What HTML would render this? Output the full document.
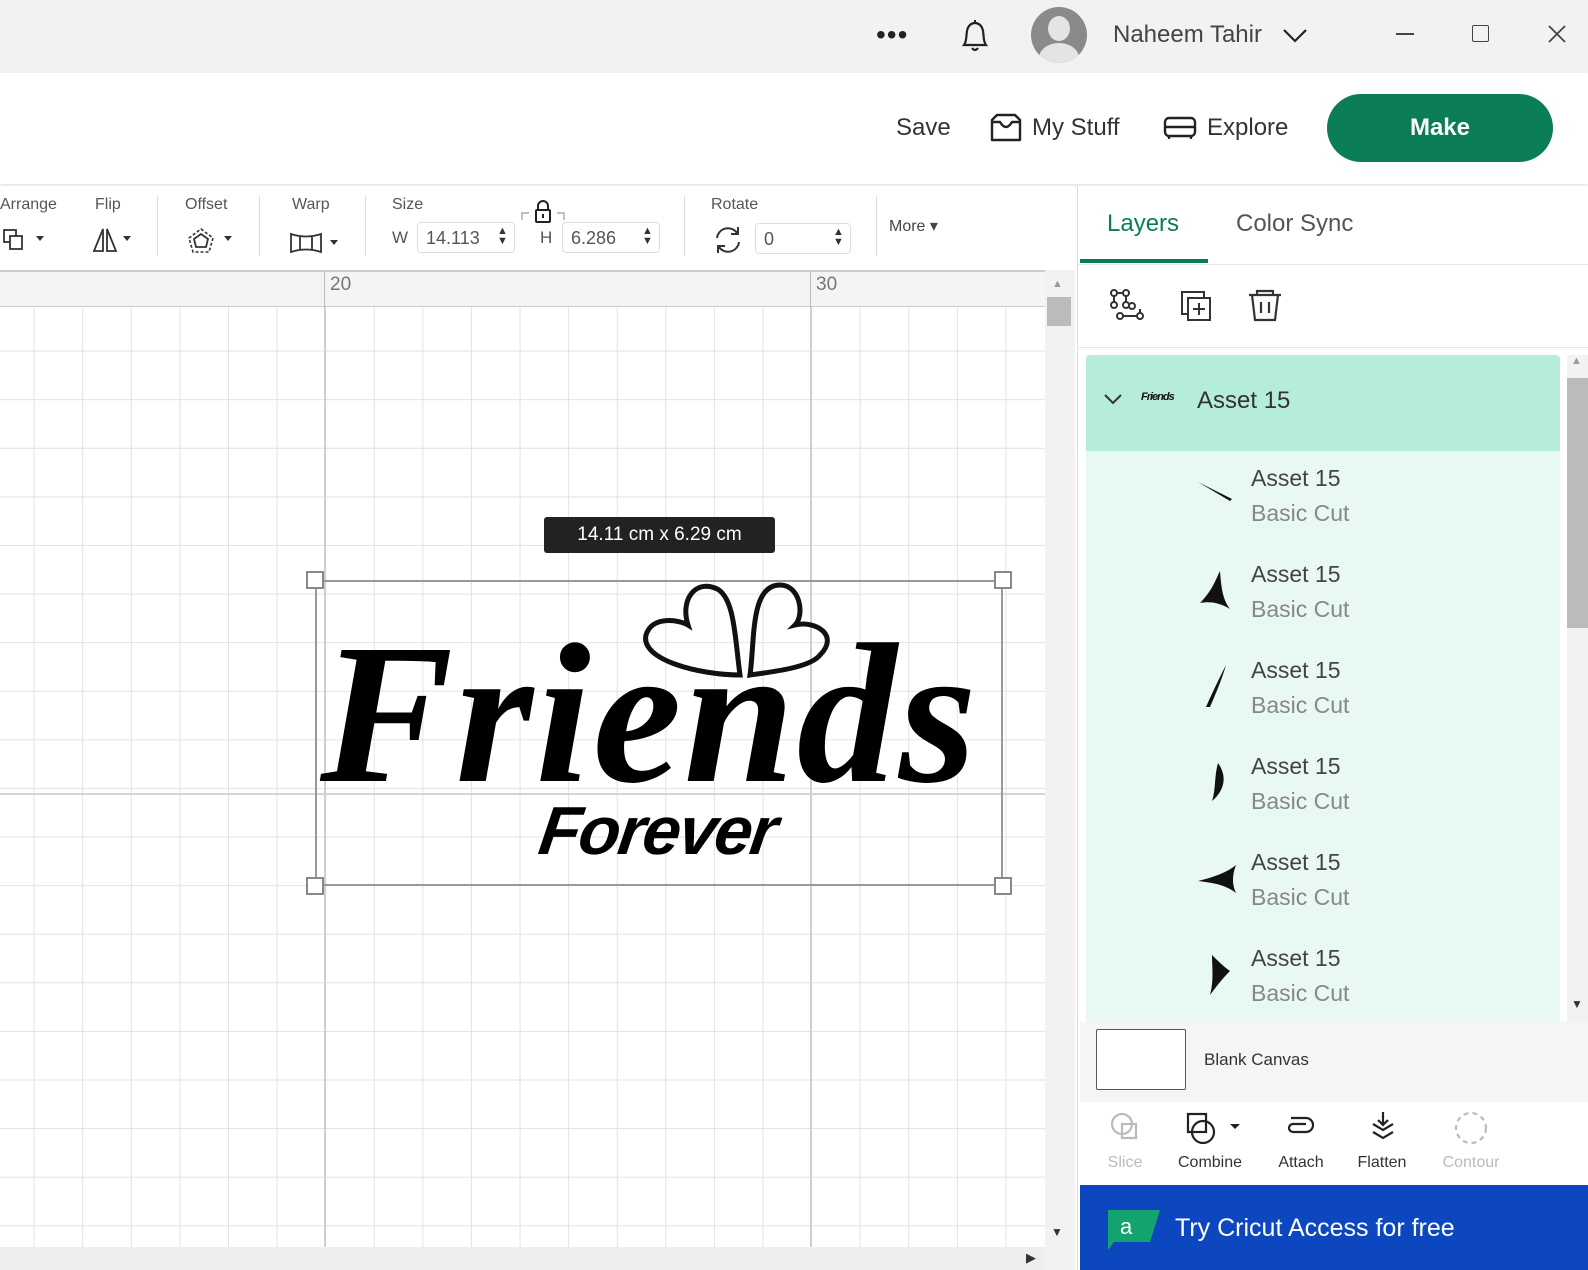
<!DOCTYPE html>
<html><head><meta charset="utf-8"><style>
*{box-sizing:border-box;margin:0;padding:0}
body{width:1588px;height:1270px;overflow:hidden;background:#fff;font-family:"Liberation Sans",sans-serif;color:#333;position:relative}
.a{position:absolute}
.top{left:0;top:0;width:1588px;height:73px;background:#f2f2f2}
.hdr{left:0;top:73px;width:1588px;height:111px;background:#fff;box-shadow:0 2px 4px rgba(0,0,0,.12)}
.tb{left:0;top:186px;width:1075px;height:84px;background:#fff}
.lbl{font-size:16px;color:#555}
.inp{border:1px solid #ddd;border-radius:4px;height:31px;font-size:18px;color:#555;padding:5px 8px;background:#fff}
.sep{width:1px;height:60px;background:#ddd;top:196px}
.ruler{left:0;top:270px;width:1045px;height:37px;background:#f4f4f4;border-top:2px solid #ccc;border-bottom:1px solid #ccc}
.grid{left:0;top:307px;width:1045px;height:940px;background:#fff;
background-image:linear-gradient(90deg,#e2e2e2 1px,transparent 1px),linear-gradient(#e2e2e2 1px,transparent 1px);
background-size:48.6px 48.6px;background-position:-15px 0,0 -5px}
.rp{left:1077px;top:186px;width:511px;height:1084px;background:#fff;border-left:1px solid #ddd}
.row{left:1086px;width:474px;height:96px;background:#e8f8f3}
.t1{position:absolute;left:165px;top:14px;font-size:23px;color:#444}
.t2{position:absolute;left:165px;top:49px;font-size:23px;color:#888}
.act{font-size:16px;text-align:center;width:80px}
</style></head><body>
<div class="a top"></div>
<div class="a" style="left:876px;top:30px;font-size:28px;letter-spacing:1px;color:#222;line-height:10px">•••</div>
<svg class="a" style="left:958px;top:18px" width="34" height="36" viewBox="0 0 34 36"><path d="M6 27 C9 23 8 18 9 13 C10 7 14 5 17 5 C20 5 24 7 25 13 C26 18 25 23 28 27 Z M14 30 Q17 34 20 30" fill="none" stroke="#222" stroke-width="2.2"/><path d="M16 2h2v3h-2z" fill="#222"/></svg>
<div class="a" style="left:1031px;top:7px;width:56px;height:56px;border-radius:50%;background:#8a8a8a;overflow:hidden"><div class="a" style="left:17px;top:9px;width:22px;height:25px;border-radius:50%;background:#e4e4e4"></div><div class="a" style="left:8px;top:36px;width:40px;height:30px;border-radius:50%;background:#e4e4e4"></div></div>
<div class="a" style="left:1113px;top:21px;font-size:24px;color:#444">Naheem Tahir</div>
<svg class="a" style="left:1282px;top:28px" width="26" height="16"><path d="M2 2 L13 13 L24 2" fill="none" stroke="#222" stroke-width="2.2"/></svg>
<div class="a" style="left:1396px;top:33px;width:18px;height:2px;background:#444"></div>
<div class="a" style="left:1472px;top:25px;width:17px;height:17px;border:1.5px solid #444;border-radius:2px"></div>
<svg class="a" style="left:1547px;top:24px" width="20" height="20"><path d="M2 2L18 18M18 2L2 18" stroke="#444" stroke-width="1.8"/></svg>
<div class="a hdr"></div>
<div class="a" style="left:896px;top:114px;font-size:24px;color:#333">Save</div>
<svg class="a" style="left:989px;top:112px" width="34" height="32"><path d="M3 8 L8 3 H26 L31 8 V28 H3 Z M3 10 H11 Q17 20 23 10 H31" fill="none" stroke="#222" stroke-width="2.4" stroke-linejoin="round"/></svg>
<div class="a" style="left:1032px;top:114px;font-size:24px;color:#333">My Stuff</div>
<svg class="a" style="left:1163px;top:116px" width="34" height="24"><rect x="2" y="2" width="30" height="18" rx="4" fill="none" stroke="#222" stroke-width="2.4"/><path d="M2 11 H32 M6 20v3 M28 20v3" stroke="#222" stroke-width="2.4"/></svg>
<div class="a" style="left:1207px;top:114px;font-size:24px;color:#333">Explore</div>
<div class="a" style="left:1327px;top:94px;width:226px;height:68px;border-radius:34px;background:#0b7d55;color:#fff;font-size:24px;font-weight:bold;text-align:center;line-height:68px">Make</div>
<div class="a tb"></div>
<div class="a lbl" style="left:0;top:196px">Arrange</div>
<div class="a lbl" style="left:95px;top:196px">Flip</div>
<div class="a lbl" style="left:185px;top:196px">Offset</div>
<div class="a lbl" style="left:292px;top:196px">Warp</div>
<div class="a lbl" style="left:392px;top:196px">Size</div>
<div class="a lbl" style="left:711px;top:196px">Rotate</div>
<div class="a sep" style="left:157px"></div><div class="a sep" style="left:259px"></div><div class="a sep" style="left:365px"></div><div class="a sep" style="left:684px"></div><div class="a sep" style="left:876px"></div>
<svg class="a" style="left:2px;top:228px" width="46" height="26"><rect x="2" y="2" width="12" height="12" fill="none" stroke="#333" stroke-width="1.8"/><rect x="8" y="8" width="12" height="13" fill="#fff" stroke="#333" stroke-width="1.8"/><path d="M34 8l4 5 4-5z" fill="#333"/></svg>
<svg class="a" style="left:90px;top:226px" width="46" height="28"><path d="M4 25 L13 3 V25 Z M17 25 V3 L26 25 Z" fill="none" stroke="#333" stroke-width="1.8"/><path d="M33 10l4 5 4-5z" fill="#333"/></svg>
<svg class="a" style="left:186px;top:226px" width="50" height="30"><path d="M15 3 L27 12 L23 26 H7 L3 12 Z" fill="none" stroke="#333" stroke-width="1.6" stroke-dasharray="3 2"/><path d="M15 8 L22 13 L20 21 H10 L8 13 Z" fill="none" stroke="#333" stroke-width="1.8"/><path d="M38 10l4 5 4-5z" fill="#333"/></svg>
<svg class="a" style="left:288px;top:230px" width="56" height="26"><path d="M3 4 Q18 9 33 4 V22 Q18 17 3 22 Z M12 7V20 M24 7V20" fill="none" stroke="#333" stroke-width="1.8"/><path d="M42 10l4 5 4-5z" fill="#333"/></svg>
<div class="a lbl" style="left:392px;top:228px;font-size:17px">W</div>
<div class="a inp" style="left:417px;top:222px;width:98px">14.113</div>
<div class="a" style="left:497px;top:226px;font-size:11px;line-height:10px;color:#333">▲<br>▼</div>
<div class="a lbl" style="left:540px;top:228px;font-size:17px">H</div>
<div class="a inp" style="left:562px;top:222px;width:98px">6.286</div>
<div class="a" style="left:642px;top:226px;font-size:11px;line-height:10px;color:#333">▲<br>▼</div>
<svg class="a" style="left:518px;top:200px" width="50" height="24"><path d="M4 20V13H11 M46 20V13H39" fill="none" stroke="#999" stroke-width="1.2"/><rect x="18" y="10" width="14" height="12" rx="1" fill="none" stroke="#222" stroke-width="2"/><path d="M20 10V6a5 5 0 0 1 10 0V10" fill="none" stroke="#222" stroke-width="2"/><rect x="24" y="14" width="2" height="4" fill="#222"/></svg>
<svg class="a" style="left:713px;top:225px" width="30" height="30"><path d="M4 13 A11 11 0 0 1 24 8 M26 17 A11 11 0 0 1 6 22" fill="none" stroke="#333" stroke-width="2"/><path d="M25 2V9H18 M5 28V21H12" fill="none" stroke="#333" stroke-width="2"/></svg>
<div class="a inp" style="left:755px;top:223px;width:96px">0</div>
<div class="a" style="left:833px;top:227px;font-size:11px;line-height:10px;color:#333">▲<br>▼</div>
<div class="a" style="left:889px;top:216px;font-size:16px;color:#444">More ▾</div>
<div class="a ruler"><div class="a" style="left:330px;top:2px;font-size:19px;color:#777">20</div><div class="a" style="left:816px;top:2px;font-size:19px;color:#777">30</div><div class="a" style="left:324px;top:0;width:1px;height:35px;background:#bbb"></div><div class="a" style="left:810px;top:0;width:1px;height:35px;background:#bbb"></div></div>
<div class="a grid"></div>
<div class="a" style="left:324px;top:307px;width:1.5px;height:940px;background:#cfcfcf"></div>
<div class="a" style="left:810px;top:307px;width:1.5px;height:940px;background:#cfcfcf"></div>
<div class="a" style="left:0;top:793px;width:1045px;height:1.5px;background:#d4d4d4"></div>
<div class="a" style="left:0;top:1247px;width:1045px;height:23px;background:#eee"></div>
<div class="a" style="left:1026px;top:1250px;font-size:13px;color:#333">▶</div>
<div class="a" style="left:1045px;top:270px;width:30px;height:1000px;background:#f2f2f2"></div>
<div class="a" style="left:1052px;top:278px;font-size:11px;color:#999">▲</div>
<div class="a" style="left:1047px;top:297px;width:24px;height:29px;background:#bbb"></div>
<div class="a" style="left:1051px;top:1225px;font-size:12px;color:#333">▼</div>
<div class="a" style="left:544px;top:517px;width:231px;height:36px;background:#222;color:#fff;border-radius:3px;font-size:19px;text-align:center;line-height:36px">14.11 cm x 6.29 cm</div>
<div class="a" style="left:315px;top:580px;width:688px;height:306px;border:2px solid #999"></div>
<div class="a" style="left:306px;top:571px;width:18px;height:18px;border:2px solid #888;background:#fff"></div>
<div class="a" style="left:994px;top:571px;width:18px;height:18px;border:2px solid #888;background:#fff"></div>
<div class="a" style="left:306px;top:877px;width:18px;height:18px;border:2px solid #888;background:#fff"></div>
<div class="a" style="left:994px;top:877px;width:18px;height:18px;border:2px solid #888;background:#fff"></div>
<svg class="a" style="left:640px;top:580px" width="205" height="110"><path d="M100 95 C60 95 0 80 6 55 C12 35 40 40 48 45 C40 20 55 0 75 8 C95 15 95 60 100 95 Z M110 95 C115 60 110 5 140 5 C160 5 165 35 155 45 C175 40 200 55 180 75 C170 88 130 92 110 95 Z" fill="none" stroke="#111" stroke-width="5"/></svg>
<div class="a" style="left:320px;top:600px;font-family:'Liberation Serif',serif;font-style:italic;font-weight:bold;font-size:200px;letter-spacing:2px;color:#000;line-height:230px">Friends</div>
<div class="a" style="left:540px;top:792px;font-family:'Liberation Sans',sans-serif;font-style:italic;font-weight:bold;font-size:68px;color:#000;letter-spacing:-2px;transform:skewX(-8deg)">Forever</div>
<div class="a rp"></div>
<div class="a" style="left:1107px;top:210px;font-size:24px;color:#0b7d55">Layers</div>
<div class="a" style="left:1236px;top:210px;font-size:24px;color:#555">Color Sync</div>
<div class="a" style="left:1080px;top:259px;width:128px;height:4px;background:#0b7d55"></div>
<div class="a" style="left:1077px;top:264px;width:511px;height:1px;background:#e5e5e5"></div>
<svg class="a" style="left:1108px;top:288px" width="40" height="36"><g fill="none" stroke="#333" stroke-width="2"><circle cx="6" cy="5" r="3"/><circle cx="18" cy="5" r="3"/><circle cx="6" cy="17" r="3"/><circle cx="18" cy="17" r="3"/><circle cx="12" cy="28" r="3"/><circle cx="32" cy="28" r="3"/><circle cx="24" cy="18" r="3"/><path d="M9 5H15M6 8V14M18 8V14M15 28H29M32 25V21"/></g></svg>
<svg class="a" style="left:1178px;top:288px" width="40" height="36"><g fill="none" stroke="#333" stroke-width="2"><rect x="4" y="4" width="22" height="22"/><rect x="10" y="10" width="22" height="22" fill="#fff"/><path d="M21 15V27M15 21H27"/></g></svg>
<svg class="a" style="left:1247px;top:288px" width="40" height="36"><g fill="none" stroke="#333" stroke-width="2.2"><path d="M2 7H34 M10 7V3H26V7 M5 7L8 32H28L31 7 M14 14V25M22 14V25"/></g></svg>
<div class="a" style="left:1077px;top:347px;width:511px;height:1px;background:#e5e5e5"></div>
<div class="a" style="left:1086px;top:355px;width:474px;height:96px;background:#b6ecdc;border-radius:4px 4px 0 0"></div>
<svg class="a" style="left:1103px;top:393px" width="20" height="14"><path d="M2 2L10 10L18 2" fill="none" stroke="#333" stroke-width="2"/></svg>
<div class="a" style="left:1141px;top:391px;font-size:11px;font-weight:bold;font-style:italic;color:#111;letter-spacing:-1px">Friends</div>
<div class="a" style="left:1197px;top:387px;font-size:24px;color:#333">Asset 15</div>
<div class="a row" style="top:451px;height:571px"></div>
<div class="a" style="left:1086px;top:451px;width:474px;height:571px">
<div class="a" style="left:0;top:0;width:474px;height:96px"><svg class="a" style="left:110px;top:28px" width="40" height="24"><path d="M2 3 L36 20 L34 22 Z" fill="#111"/></svg><div class="t1">Asset 15</div><div class="t2">Basic Cut</div></div>
<div class="a" style="left:0;top:96px;width:474px;height:96px"><svg class="a" style="left:110px;top:22px" width="40" height="44"><path d="M24 2 C20 10 16 22 4 34 C15 32 24 34 34 40 C26 30 25 15 24 2Z" fill="#111"/></svg><div class="t1">Asset 15</div><div class="t2">Basic Cut</div></div>
<div class="a" style="left:0;top:192px;width:474px;height:96px"><svg class="a" style="left:110px;top:20px" width="40" height="50"><path d="M30 2 C24 14 16 30 10 44 L14 44 C20 30 26 16 30 2Z" fill="#111"/></svg><div class="t1">Asset 15</div><div class="t2">Basic Cut</div></div>
<div class="a" style="left:0;top:288px;width:474px;height:96px"><svg class="a" style="left:110px;top:20px" width="40" height="50"><path d="M22 4 C32 18 28 32 16 42 C20 30 18 18 22 4Z" fill="#111"/></svg><div class="t1">Asset 15</div><div class="t2">Basic Cut</div></div>
<div class="a" style="left:0;top:384px;width:474px;height:96px"><svg class="a" style="left:110px;top:28px" width="44" height="36"><path d="M40 2 C30 10 18 14 2 18 C18 20 30 22 40 30 C36 22 36 12 40 2Z" fill="#111"/></svg><div class="t1">Asset 15</div><div class="t2">Basic Cut</div></div>
<div class="a" style="left:0;top:480px;width:474px;height:96px"><svg class="a" style="left:110px;top:22px" width="40" height="50"><path d="M16 2 C22 8 28 14 34 18 C26 26 20 34 14 42 C18 28 16 14 16 2Z" fill="#111"/></svg><div class="t1">Asset 15</div><div class="t2">Basic Cut</div></div>
</div>
<div class="a" style="left:1567px;top:355px;width:21px;height:667px;background:#f2f2f2"></div>
<div class="a" style="left:1571px;top:355px;font-size:11px;color:#999">▲</div>
<div class="a" style="left:1567px;top:378px;width:21px;height:250px;background:#bbb"></div>
<div class="a" style="left:1571px;top:997px;font-size:12px;color:#333">▼</div>
<div class="a" style="left:1080px;top:1022px;width:508px;height:80px;background:#f5f5f5"></div>
<div class="a" style="left:1096px;top:1029px;width:90px;height:61px;border:1px solid #555;border-radius:2px;background:#fff"></div>
<div class="a" style="left:1204px;top:1050px;font-size:17px;color:#333">Blank Canvas</div>
<svg class="a" style="left:1108px;top:1110px" width="380" height="36"><g fill="none" stroke-width="2.2"><g stroke="#bbb"><circle cx="14" cy="14" r="10"/><rect x="14" y="14" width="14" height="14"/></g><g stroke="#222"><rect x="80" y="4" width="18" height="18"/><circle cx="95" cy="22" r="11"/><path d="M183 8H198A7 7 0 0 1 198 22H185A4 4 0 0 1 185 14H198"/><path d="M275 2V14M270 10L275 15L280 10M265 14L275 20L285 14M265 22L275 28L285 22"/></g><circle cx="363" cy="18" r="15" stroke="#bbb" stroke-dasharray="5 4"/></g><path d="M122 14l5 5 5-5z" fill="#222"/></svg>
<div class="a act" style="left:1085px;top:1154px;color:#bbb">Slice</div>
<div class="a act" style="left:1170px;top:1154px;color:#333">Combine</div>
<div class="a act" style="left:1261px;top:1154px;color:#333">Attach</div>
<div class="a act" style="left:1342px;top:1154px;color:#333">Flatten</div>
<div class="a act" style="left:1431px;top:1154px;color:#bbb">Contour</div>
<div class="a" style="left:1080px;top:1185px;width:508px;height:85px;background:#0d47c0"></div>
<svg class="a" style="left:1106px;top:1208px" width="56" height="48"><path d="M2 2H54L44 34H8L2 42Z" fill="#13a36e"/><text x="14" y="26" font-family="Liberation Sans" font-size="22" fill="#fff">a</text></svg>
<div class="a" style="left:1175px;top:1214px;font-size:25px;color:#fff">Try Cricut Access for free</div>
</body></html>
